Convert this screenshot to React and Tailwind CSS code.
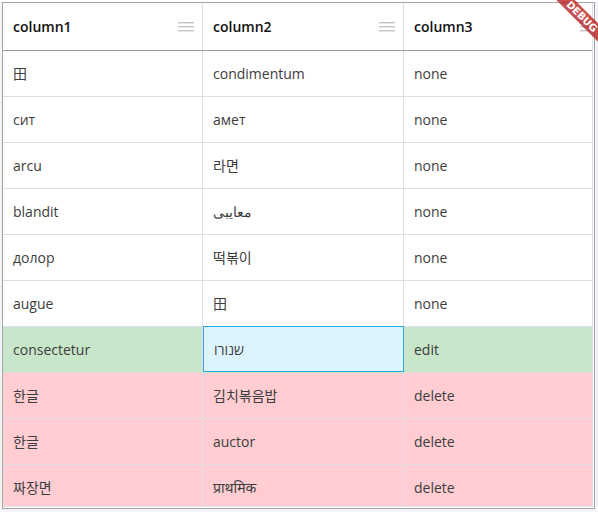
import React from "react";

const rows = [
  { c: ["田", "condimentum", "none"], kind: "none" },
  { c: ["сит", "амет", "none"], kind: "none" },
  { c: ["arcu", "라면", "none"], kind: "none" },
  { c: ["blandit", "معايبى", "none"], kind: "none" },
  { c: ["долор", "떡볶이", "none"], kind: "none" },
  { c: ["augue", "田", "none"], kind: "none" },
  { c: ["consectetur", "שנורו", "edit"], kind: "edit" },
  { c: ["한글", "김치볶음밥", "delete"], kind: "delete" },
  { c: ["한글", "auctor", "delete"], kind: "delete" },
  { c: ["짜장면", "प्राथमिक", "delete"], kind: "delete" },
];

function Menu() {
  return (
    <svg width="16" height="12" viewBox="0 0 16 12" className="shrink-0">
      <rect x="0" y="1" width="16" height="1.4" fill="#c4c4c4" />
      <rect x="0" y="5" width="16" height="1.4" fill="#c4c4c4" />
      <rect x="0" y="9" width="16" height="1.4" fill="#c4c4c4" />
    </svg>
  );
}

const widths = ["w-[200px]", "w-[201px]", "w-[200px]"];

export default function App() {
  const font = { fontFamily: '"Open Sans", "Noto Sans", "Noto Sans CJK KR", "Noto Sans Devanagari", sans-serif' };
  return (
    <div className="relative w-[598px] h-[512px] bg-[#f2f4f7] overflow-hidden" style={font}>
      <div className="absolute left-0 top-0 w-[598px] h-[2px] bg-white" />
      <div className="ml-[2px] mt-[2px] w-[593px] h-[507px] border border-[#a3a3a3] bg-white overflow-hidden">
        <div className="w-[590px] h-[504px] border-r border-b border-[#dde0e6] overflow-hidden">
          <div className="flex w-[601px] h-[48px] border-b border-[#9e9e9e]">
            {["column1", "column2", "column3"].map((h, i) => (
              <div
                key={h}
                className={`${widths[i]} shrink-0 h-full flex items-center justify-between pl-[10px] pr-[8px] ${i < 2 ? "border-r border-[#dde0e6]" : ""}`}
              >
                <span className="text-[14px] font-semibold text-[#111]">{h}</span>
                <Menu />
              </div>
            ))}
          </div>
          {rows.map((r, ri) => {
            const bg =
              r.kind === "edit" ? "bg-[#c8e6c9]" : r.kind === "delete" ? "bg-[#ffcdd2]" : "bg-white";
            return (
              <div key={ri} className={`flex w-[601px] h-[46px] shrink-0 ${bg}`}>
                {r.c.map((t, ci) => {
                  const sel = r.kind === "edit" && ci === 1;
                  return (
                    <div
                      key={ci}
                      className={`${widths[ci]} shrink-0 h-full flex items-center pl-[10px] text-[14px] text-[#3d3d3d] ${
                        sel
                          ? "bg-[#dcf4fd] border border-[#29a9e6] -mt-[1px] h-[46px]"
                          : `border-b ${ci < 2 ? "border-r" : ""} ${r.kind === "none" ? "border-[#dde0e6]" : "border-[#e3dbe0]"}`
                      }`}
                    >
                      <span>{t}</span>
                    </div>
                  );
                })}
              </div>
            );
          })}
        </div>
      </div>
      <div className="absolute left-[530px] top-[10px] w-[104px] h-[13px] rotate-45 bg-[rgba(183,28,28,0.78)] flex items-center justify-center">
        <span className="text-[10px] leading-none font-bold text-white" style={{ fontFamily: '"DejaVu Sans", sans-serif' }}>
          DEBUG
        </span>
      </div>
    </div>
  );
}
